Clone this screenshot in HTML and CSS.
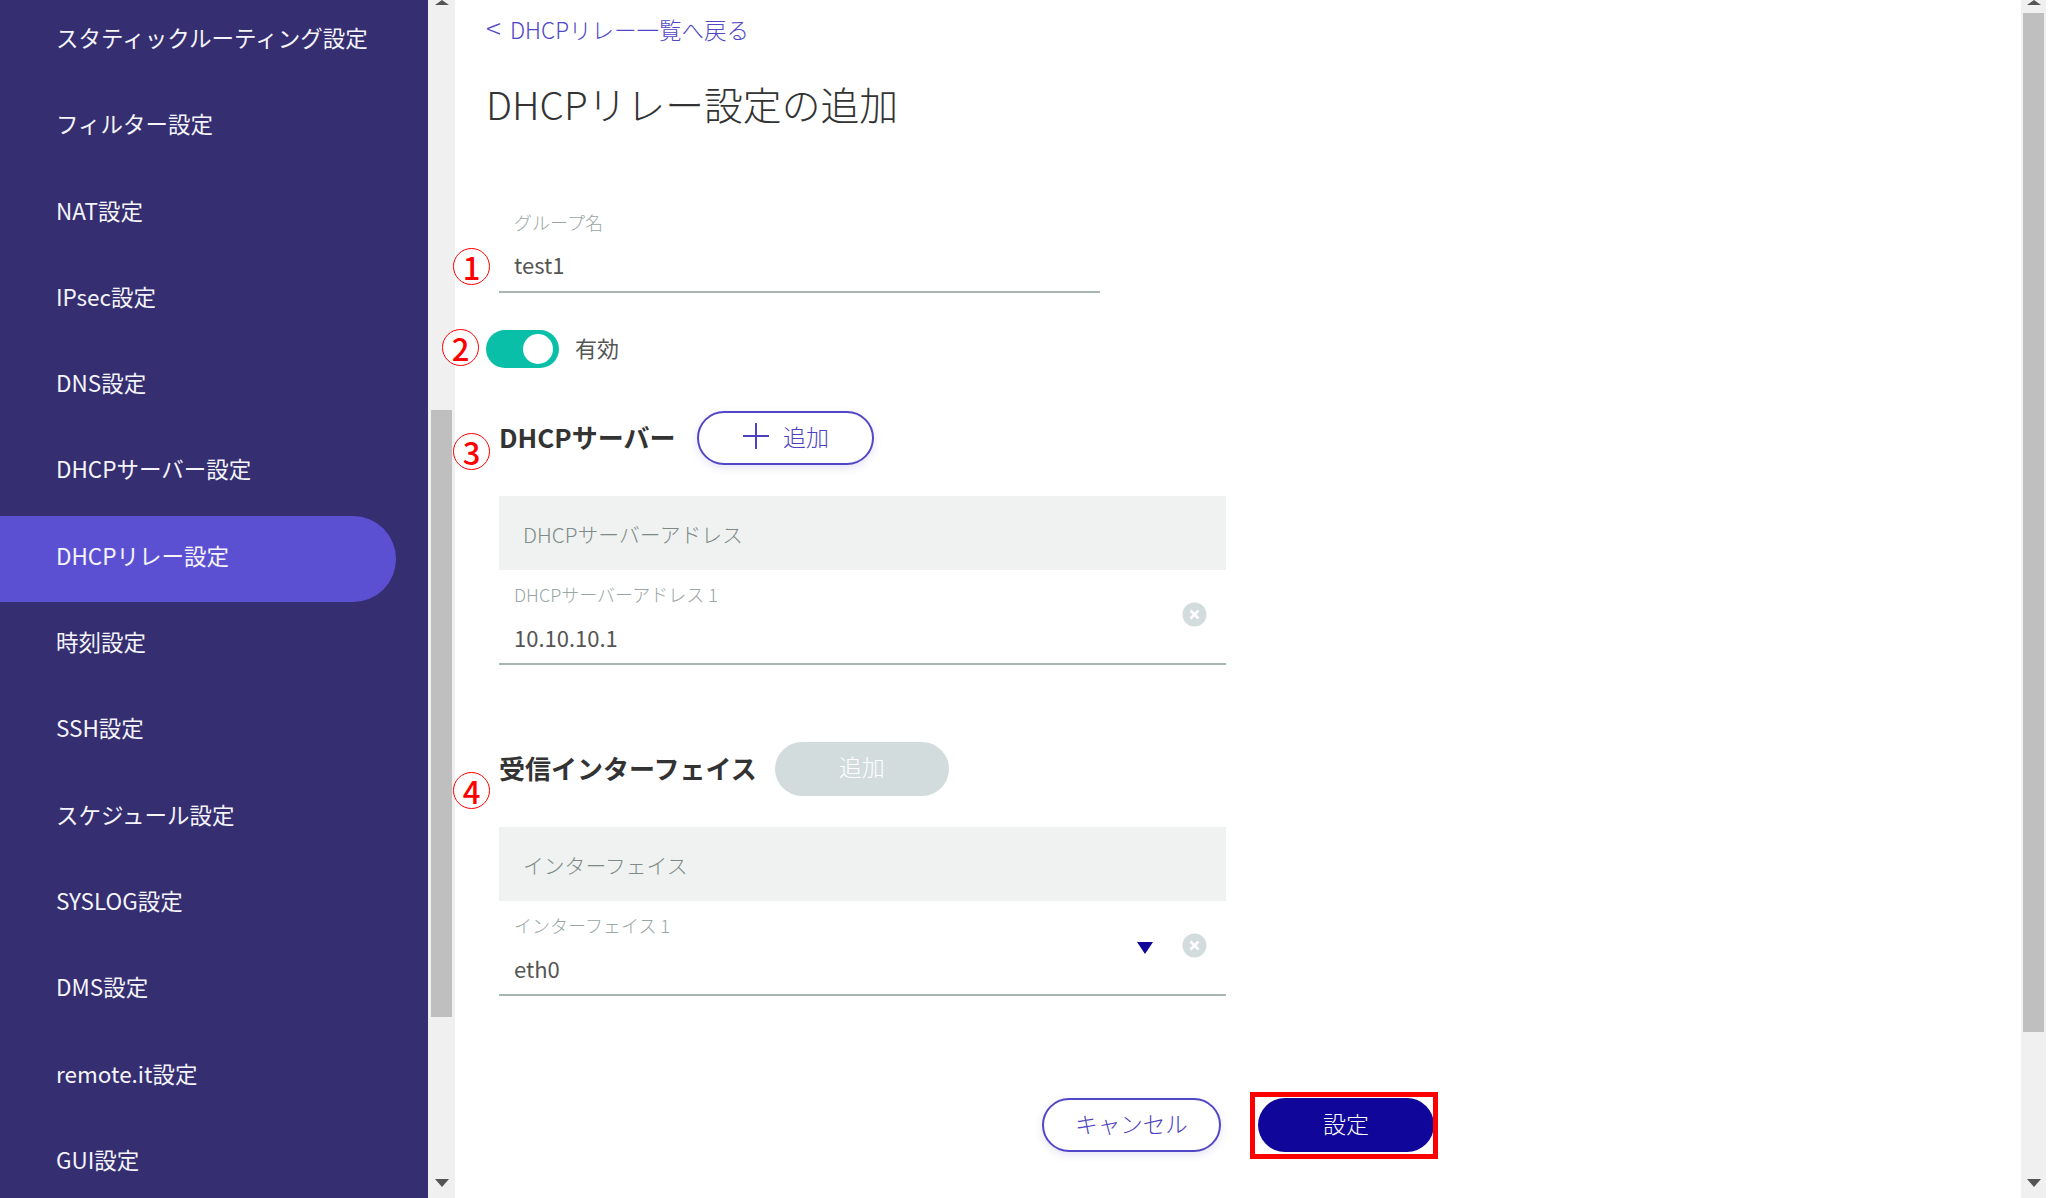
FILE: index.html
```html
<!DOCTYPE html>
<html lang="ja">
  <head>
    <meta charset="UTF-8" />
    <title>DHCPリレー設定の追加</title>
    <link rel="stylesheet" href="styles.css">
  </head>
  <body>
    <!-- サイドメニュー -->
    <div class="sidebar">
      <a class="menu-item">スタティックルーティング設定</a>
      <a class="menu-item">フィルター設定</a>
      <a class="menu-item">NAT設定</a>
      <a class="menu-item">IPsec設定</a>
      <a class="menu-item">DNS設定</a>
      <a class="menu-item">DHCPサーバー設定</a>
      <a class="menu-item active">DHCPリレー設定</a>
      <a class="menu-item">時刻設定</a>
      <a class="menu-item">SSH設定</a>
      <a class="menu-item">スケジュール設定</a>
      <a class="menu-item">SYSLOG設定</a>
      <a class="menu-item">DMS設定</a>
      <a class="menu-item">remote.it設定</a>
      <a class="menu-item">GUI設定</a>
    </div>

    <div class="scrollbar scrollbar-side">
      <div class="arrow-up"></div>
      <div class="thumb"></div>
      <div class="arrow-down"></div>
    </div>

    <div class="page">
      <a class="back-link"><span class="back-mark">&lt;</span>DHCPリレー一覧へ戻る</a>
      <h1 class="title">DHCPリレー設定の追加</h1>

      <div class="form">
        <div class="field field-group">
          <div class="field-label">グループ名</div>
          <div class="field-value">test1</div>
        </div>

        <div class="toggle-row">
          <div class="toggle"><div class="toggle-knob"></div></div>
          <div class="toggle-label">有効</div>
        </div>

        <!-- DHCPサーバー -->
        <div class="section-head">
          <h2>DHCPサーバー</h2>
          <button class="btn btn-add">
            <svg class="plus" viewBox="0 0 26 26" width="26" height="26">
              <path d="M13 0V26M0 13H26" stroke="#4d41bd" stroke-width="2" fill="none" />
            </svg>
            追加
          </button>
        </div>
        <div class="table-head">DHCPサーバーアドレス</div>
        <div class="field">
          <div class="field-label">DHCPサーバーアドレス 1</div>
          <div class="field-value">10.10.10.1</div>
          <svg class="clear" viewBox="0 0 25 25" width="25" height="25">
            <circle cx="12.5" cy="12.5" r="12" fill="#d2dcdc" />
            <path d="M8.5 8.5L16.5 16.5M16.5 8.5L8.5 16.5" stroke="#fff" stroke-width="2.6" />
          </svg>
        </div>

        <!-- 受信インターフェイス -->
        <div class="section-head section-second">
          <h2>受信インターフェイス</h2>
          <button class="btn btn-disabled">追加</button>
        </div>
        <div class="table-head">インターフェイス</div>
        <div class="field">
          <div class="field-label">インターフェイス 1</div>
          <div class="field-value">eth0</div>
          <div class="select-arrow"></div>
          <svg class="clear" viewBox="0 0 25 25" width="25" height="25">
            <circle cx="12.5" cy="12.5" r="12" fill="#d2dcdc" />
            <path d="M8.5 8.5L16.5 16.5M16.5 8.5L8.5 16.5" stroke="#fff" stroke-width="2.6" />
          </svg>
        </div>

        <div class="actions">
          <button class="btn btn-cancel">キャンセル</button>
          <div class="submit-wrap">
            <button class="btn btn-submit">設定</button>
            <div class="red-frame"></div>
          </div>
        </div>
      </div>

      <!-- 赤丸の注釈 -->
      <div class="note note-1">1</div>
      <div class="note note-2">2</div>
      <div class="note note-3">3</div>
      <div class="note note-4">4</div>
    </div>

    <div class="scrollbar scrollbar-main">
      <div class="arrow-up"></div>
      <div class="thumb"></div>
      <div class="arrow-down"></div>
    </div>
  </body>
</html>
```

FILE: styles.css
```css
* {
  margin: 0;
  padding: 0;
  box-sizing: border-box;
}

html,
body {
  height: 100%;
  overflow: hidden;
}

body {
  display: flex;
  font-family: "Noto Sans CJK JP", "Noto Sans", sans-serif;
  font-weight: 300;
  background-color: #fff;
  color: #444;
}

/* サイドメニュー */
.sidebar {
  width: 428px;
  flex-shrink: 0;
  height: 100%;
  overflow: hidden;
  background-color: #352e70;
  padding-right: 32px;
}

.menu-item {
  display: block;
  height: 86.3px;
  line-height: 79px;
  padding-left: 56px;
  color: #f4f4fa;
  font-size: 22.5px;
  font-weight: 400;
  white-space: nowrap;
}

.menu-item:first-child {
  margin-top: -2px;
}

.menu-item.active {
  background-color: #5c50d2;
  border-radius: 0 43px 43px 0;
}

/* スクロールバー */
.scrollbar {
  flex-shrink: 0;
  height: 100%;
  background-color: #f0f0f0;
  display: flex;
  flex-direction: column;
  align-items: center;
}

.scrollbar-side {
  width: 27px;
}

.scrollbar-main {
  width: 25px;
  margin-right: 2px;
}

.thumb {
  width: 21px;
  background-color: #bfbfbf;
}

.scrollbar-side .thumb {
  height: 607px;
  margin-top: 405px;
}

.scrollbar-main .thumb {
  height: 1019px;
  margin-top: 8px;
}

.arrow-up {
  width: 0;
  height: 5px;
  border-left: 7px solid transparent;
  border-right: 7px solid transparent;
  border-bottom: 5px solid #555;
}

.arrow-down {
  width: 0;
  height: 8px;
  margin-top: auto;
  margin-bottom: 11px;
  border-left: 7px solid transparent;
  border-right: 7px solid transparent;
  border-top: 8px solid #555;
}

/* メイン */
.page {
  flex: 1;
  position: relative;
  padding-left: 31px;
  padding-top: 10px;
}

.back-link {
  display: block;
  height: 40px;
  line-height: 35px;
  font-size: 22.5px;
  color: #5146c5;
}

.back-mark {
  font-size: 28px;
  margin-right: 9px;
}

.title {
  margin-top: 31px;
  height: 50px;
  line-height: 45px;
  font-size: 38.8px;
  font-weight: 300;
  color: #333;
}

.form {
  margin-left: 13px;
  width: 935px;
  margin-top: 79px;
}

.field {
  position: relative;
  width: 727px;
  padding: 12px 0 12px 15px;
  border-bottom: 2px solid #a9b5b3;
}

.field-group {
  width: 601px;
  padding-top: 0;
  padding-bottom: 13px;
}

.field-label {
  height: 24px;
  line-height: 24px;
  font-size: 18px;
  color: #9aa6a4;
}

.field-value {
  margin-top: 21px;
  height: 24px;
  line-height: 21px;
  font-size: 22px;
  font-weight: 400;
  color: #555;
}

.field-group .field-value {
  margin-top: 20px;
}

.clear {
  position: absolute;
  right: 19px;
  top: 32px;
}

.select-arrow {
  position: absolute;
  right: 73px;
  top: 41px;
  width: 0;
  height: 0;
  border-left: 8px solid transparent;
  border-right: 8px solid transparent;
  border-top: 12px solid #10069a;
}

/* トグル */
.toggle-row {
  display: flex;
  align-items: center;
  gap: 16px;
  margin-top: 37px;
  margin-left: -13px;
}

.toggle {
  width: 73px;
  height: 38px;
  border-radius: 19px;
  background-color: #0abfa8;
  padding: 4px 4px 4px 37px;
}

.toggle-knob {
  width: 30px;
  height: 30px;
  border-radius: 50%;
  background-color: #fff;
}

.toggle-label {
  padding-bottom: 5px;
  font-size: 22px;
  font-weight: 400;
  color: #555;
}

/* 見出し */
.section-head {
  display: flex;
  align-items: center;
  gap: 22px;
  margin-top: 43px;
  color: #333;
}

.section-head h2 {
  padding-bottom: 3px;
  font-size: 26px;
  font-weight: 700;
}

.section-second {
  gap: 18px;
  margin-top: 77px;
}

.table-head {
  width: 727px;
  height: 74px;
  margin-top: 31px;
  padding-left: 24px;
  line-height: 77px;
  background-color: #f0f2f1;
  font-size: 20.8px;
  color: #7d8a87;
}

/* ボタン */
.btn {
  display: flex;
  align-items: center;
  justify-content: center;
  height: 54px;
  padding-bottom: 5px;
  border-radius: 27px;
  border: 2px solid transparent;
  font-family: inherit;
  font-weight: 300;
  font-size: 23px;
  background: none;
}

.btn-add {
  width: 177px;
  gap: 14px;
  border-color: #5146c5;
  color: #4d41bd;
  box-shadow: 0 3px 8px rgba(80, 70, 190, 0.15);
}

.btn-disabled {
  width: 174px;
  padding-bottom: 7px;
  background-color: #d2dcdc;
  color: #fff;
}

.actions {
  display: flex;
  justify-content: flex-end;
  gap: 37px;
  margin-top: 102px;
}

.btn-cancel {
  width: 179px;
  border-color: #5146c5;
  color: #4d41bd;
  font-size: 22.5px;
  box-shadow: 0 3px 8px rgba(80, 70, 190, 0.15);
}

.submit-wrap {
  position: relative;
}

.btn-submit {
  width: 176px;
  background-color: #10069a;
  color: #fff;
}

.red-frame {
  position: absolute;
  left: -8px;
  right: -4px;
  top: -6px;
  bottom: -7px;
  border: 5px solid #f00;
}

/* 注釈 */
.note {
  position: absolute;
  width: 37px;
  height: 37px;
  border: 1px solid #f00;
  border-radius: 50%;
  background-color: #fff;
  color: #f00;
  font-size: 31px;
  font-weight: 500;
  line-height: 35px;
  text-align: center;
}

.note-1 { left: -2px; top: 248px; }
.note-2 { left: -13px; top: 329px; }
.note-3 { left: -2px; top: 433px; }
.note-4 { left: -2px; top: 772px; }
```
